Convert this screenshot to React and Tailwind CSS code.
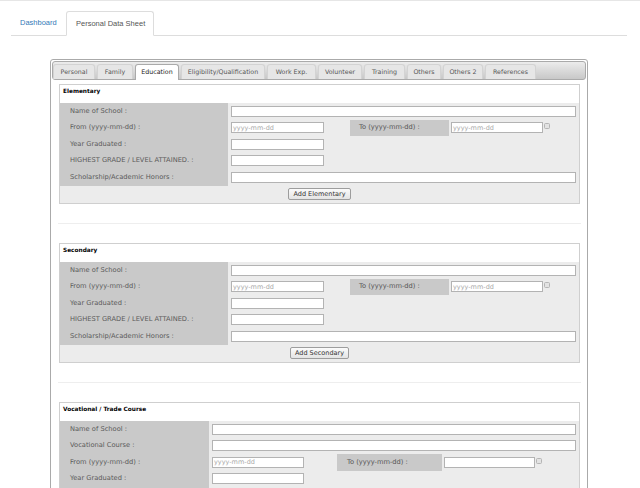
import React from "react";

const TABS = [
  { t: "Personal", w: "w-[42px]" },
  { t: "Family", w: "w-[36px]" },
  { t: "Education", w: "w-[44px]", active: true },
  { t: "Eligibility/Qualification", w: "w-[84px]" },
  { t: "Work Exp.", w: "w-[49px]" },
  { t: "Volunteer", w: "w-[44px]" },
  { t: "Training", w: "w-[41px]" },
  { t: "Others", w: "w-[34px]" },
  { t: "Others 2", w: "w-[40px]" },
  { t: "References", w: "w-[51px]" },
];

function Input({ w, placeholder }) {
  return (
    <div
      className={`${w} h-[11px] border border-[#b3b3b3] bg-white flex items-center pl-[1px] text-[6.5px] text-[#aaa] leading-none`}
    >
      {placeholder || ""}
    </div>
  );
}

function Row({ label, labelW, children }) {
  return (
    <div className="flex h-[16.5px]">
      <div
        className={`${labelW} shrink-0 bg-[#c9c9c9] flex items-center pl-[10px] text-[#5a5a5a] text-[6.7px] leading-none whitespace-nowrap`}
      >
        {label}
      </div>
      <div className="flex-1 bg-[#ececec] flex items-center pl-[3px] pr-[3px]">
        {children}
      </div>
    </div>
  );
}

function DateRow({ labelW, fromW, gap, toBoxW, toW, toPl, toPh }) {
  return (
    <Row label="From (yyyy-mm-dd) :" labelW={labelW}>
      <Input w={fromW} placeholder="yyyy-mm-dd" />
      <div
        className={`${gap} ${toBoxW} ${toPl} h-full bg-[#c9c9c9] flex items-center text-[#555] text-[6.7px] leading-none whitespace-nowrap`}
      >
        To (yyyy-mm-dd) :
      </div>
      <div className="ml-[2px] flex items-start">
        <Input w={toW} placeholder={toPh ? "yyyy-mm-dd" : ""} />
        <div className="ml-[1px] mt-[1px] w-[6px] h-[6px] border border-[#b5b5b5] rounded-[1.5px] bg-[#e3e3e3]" />
      </div>
    </Row>
  );
}

function Section({ title, labelW, rows, button, date }) {
  return (
    <div className="border border-[#cfcfcf]">
      <div className="h-[18px] bg-white flex items-start pt-[3px] pl-[3px] text-[5.8px] font-bold text-black leading-[7px]">
        {title}
      </div>
      {rows.map((r, i) =>
        r === "DATE" ? (
          <DateRow key={i} labelW={labelW} {...date} />
        ) : (
          <Row key={i} label={r.l} labelW={labelW}>
            <Input w={r.w} />
          </Row>
        )
      )}
      <div className="h-[17.5px] bg-[#ececec] flex items-center justify-center">
        <div className="h-[12px] px-[4px] border border-[#9d9d9d] rounded-[2px] bg-gradient-to-b from-[#fbfbfb] to-[#e4e4e4] flex items-center text-[6.5px] text-[#333] leading-none">
          {button}
        </div>
      </div>
    </div>
  );
}

function Separator() {
  return <div className="mt-[19px] mb-[19px] h-[1px] bg-[#eeeeee] -mx-[1px]" />;
}

export default function App() {
  const full = "w-[345px]";
  const short = "w-[93px]";
  const elemRows = [
    { l: "Name of School :", w: full },
    "DATE",
    { l: "Year Graduated :", w: short },
    { l: "HIGHEST GRADE / LEVEL ATTAINED. :", w: short },
    { l: "Scholarship/Academic Honors :", w: full },
  ];
  const elemDate = {
    fromW: "w-[93px]",
    gap: "ml-[26px]",
    toBoxW: "w-[99px]",
    toW: "w-[92px]",
    toPl: "pl-[9px]",
    toPh: true,
  };
  const vocRows = [
    { l: "Name of School :", w: "w-[364px]" },
    { l: "Vocational Course :", w: "w-[364px]" },
    "DATE",
    { l: "Year Graduated :", w: "w-[92px]" },
    { l: "HIGHEST GRADE / LEVEL ATTAINED. :", w: "w-[92px]" },
    { l: "Scholarship/Academic Honors :", w: "w-[364px]" },
  ];
  const vocDate = {
    fromW: "w-[92px]",
    gap: "ml-[33px]",
    toBoxW: "w-[105px]",
    toW: "w-[91px]",
    toPl: "pl-[10px]",
    toPh: false,
  };

  return (
    <div className="min-h-[488px] bg-white border-t border-[#e6e6e6] font-['DejaVu_Sans',Verdana,sans-serif]">
      {/* top nav */}
      <div className="ml-[11px] w-[616px] mt-[10px] h-[25px] border-b border-[#dddddd] flex items-end font-['Liberation_Sans',Arial,sans-serif] text-[7.5px]">
        <div className="h-[24px] w-[55px] flex items-center pl-[9px] text-[#337ab7]">Dashboard</div>
        <div className="h-[25px] w-[88px] -mb-[1px] border border-[#dddddd] border-b-white rounded-t-[3px] bg-white flex items-center pl-[9px] text-[#555]">
          Personal Data Sheet
        </div>
      </div>

      {/* main widget */}
      <div className="ml-[50px] mt-[23px] w-[538px] border border-[#aaaaaa] rounded-[3px] p-[1px] bg-white">
        <div className="h-[19px] border border-[#aaaaaa] rounded-[3px] bg-gradient-to-b from-[#ececec] to-[#c8c8c8] flex items-end gap-[2px]">
          {TABS.map((t) =>
            t.active ? (
              <div
                key={t.t}
                className={`${t.w} h-[16px] -mb-[1px] bg-white border border-[#aaaaaa] border-b-0 rounded-t-[3px] flex items-center justify-center text-[6.3px] text-[#212121] leading-none`}
              >
                {t.t}
              </div>
            ) : (
              <div
                key={t.t}
                className={`${t.w} h-[15px] bg-[#e6e6e6] border border-[#d3d3d3] border-b-0 rounded-t-[3px] flex items-center justify-center text-[6.3px] text-[#555] leading-none`}
              >
                {t.t}
              </div>
            )
          )}
        </div>

        <div className="pl-[7px] pr-[6px] pt-[4px] pb-[20px]">
          <Section
            title="Elementary"
            labelW="w-[168px]"
            rows={elemRows}
            button="Add Elementary"
            date={elemDate}
          />
          <Separator />
          <Section
            title="Secondary"
            labelW="w-[168px]"
            rows={elemRows}
            button="Add Secondary"
            date={elemDate}
          />
          <Separator />
          <Section
            title="Vocational / Trade Course"
            labelW="w-[149px]"
            rows={vocRows}
            button="Add Vocational"
            date={vocDate}
          />
        </div>
      </div>
    </div>
  );
}
